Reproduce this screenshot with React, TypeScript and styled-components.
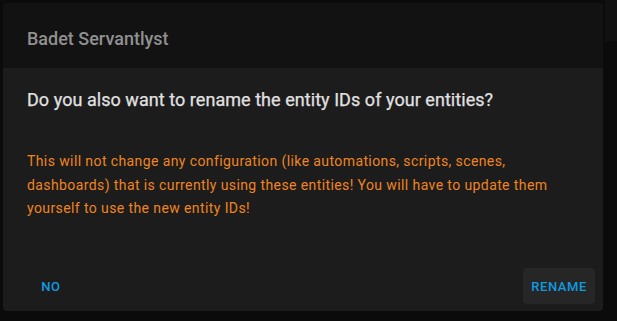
import React from "react";
import styled, { createGlobalStyle } from "styled-components";

const Global = createGlobalStyle`
  html, body {
    margin: 0;
    padding: 0;
    background: #0b0b0b;
    width: 617px;
    height: 321px;
    overflow: hidden;
  }
  * { box-sizing: border-box; }
`;

const Page = styled.div`
  position: relative;
  width: 617px;
  height: 321px;
  padding: 3px 14px 0 3px;
  font-family: Roboto, "Noto Sans", sans-serif;
`;

const Backdrop = styled.div`
  position: absolute;
  top: 0;
  right: 0;
  width: 12px;
  height: 41px;
  background: #111111;
`;

const Dialog = styled.div`
  position: relative;
  width: 600px;
  height: 308px;
  border-radius: 4px;
  overflow: hidden;
  background: #1c1c1c;
  display: flex;
  flex-direction: column;
`;

const Header = styled.div`
  height: 65px;
  background: #121212;
  padding: 24px 24px 0 24px;
  display: flex;
  align-items: flex-start;
`;

const Title = styled.h2`
  margin: 0;
  font-size: 18px;
  font-weight: 500;
  line-height: 24px;
  color: #909090;
  letter-spacing: 0;
`;

const Content = styled.div`
  flex: 1;
  padding: 20px 24px 0 24px;
  display: flex;
  flex-direction: column;
`;

const Question = styled.p`
  margin: 0;
  font-size: 18px;
  font-weight: 400;
  line-height: 24px;
  color: #e1e1e1;
  letter-spacing: 0.05px;
  -webkit-text-stroke: 0.25px #e1e1e1;
`;

const Warning = styled.p`
  margin: 38px 0 0 0;
  font-size: 14px;
  font-weight: 400;
  line-height: 23.5px;
  color: #ef8421;
  letter-spacing: 0.4px;
`;

const Actions = styled.div`
  display: flex;
  justify-content: space-between;
  align-items: center;
  padding: 0 8px 7px 16px;
`;

const Button = styled.button<{ $active?: boolean }>`
  min-width: 64px;
  height: 36px;
  padding: 0 8px;
  border: none;
  border-radius: 4px;
  background: ${(p) => (p.$active ? "#262626" : "transparent")};
  color: #0f9be0;
  font-family: Roboto, "Noto Sans", sans-serif;
  font-size: 13px;
  font-weight: 500;
  letter-spacing: 0.6px;
  text-transform: uppercase;
  cursor: pointer;
`;

export default function App() {
  return (
    <>
      <Global />
      <Page>
        <Backdrop />
        <Dialog>
          <Header>
            <Title>Badet Servantlyst</Title>
          </Header>
          <Content>
            <Question>Do you also want to rename the entity IDs of your entities?</Question>
            <Warning>
              This will not change any configuration (like automations, scripts, scenes,
              dashboards) that is currently using these entities! You will have to update them
              yourself to use the new entity IDs!
            </Warning>
          </Content>
          <Actions>
            <Button>No</Button>
            <Button $active>Rename</Button>
          </Actions>
        </Dialog>
      </Page>
    </>
  );
}
